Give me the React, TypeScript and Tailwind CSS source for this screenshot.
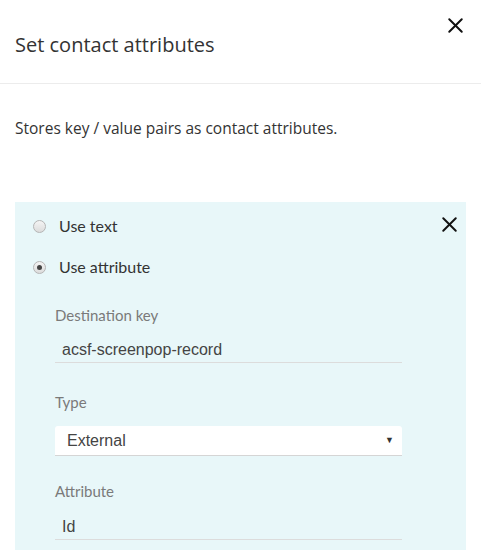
import { X } from 'lucide-react';

function Radio({ checked, label }: { checked?: boolean; label: string }) {
  return (
    <label className="flex h-[20px] items-center gap-[13px]">
      <span className="flex h-[13px] w-[13px] items-center justify-center rounded-full border border-[#b5b5b5] bg-gradient-to-b from-[#f4f4f4] to-[#dcdcdc]">
        {checked ? <span className="h-[5px] w-[5px] rounded-full bg-[#444]" /> : null}
      </span>
      <span className="text-[16px] text-[#333]">{label}</span>
    </label>
  );
}

function Field({ label, value, last }: { label: string; value: string; last?: boolean }) {
  return (
    <div className="flex flex-col">
      <span className="h-[20px] text-[15px] leading-[20px] text-[#7a7a7a]">{label}</span>
      <div
        className={`${last ? 'mt-[14px]' : 'mt-[12px]'} flex ${last ? 'h-[25px]' : 'h-[26px]'} items-center border-b border-[#dcdcdc] pl-[7px] font-['Liberation_Sans',Arial,sans-serif] text-[16px] text-[#444]`}
      >
        {value}
      </div>
    </div>
  );
}

export default function App() {
  return (
    <div className="h-[550px] w-[481px] overflow-hidden bg-white font-['Lato',sans-serif]">
      <div className="flex h-[84px] items-start justify-between border-b border-[#ececec] pl-[15px] pr-[13px]">
        <h1 className="mt-[31px] font-['Open_Sans',sans-serif] text-[20px] leading-[28px] text-[#333]">
          Set contact attributes
        </h1>
        <button type="button" className="mt-[13px] text-[#111]">
          <X size={25} strokeWidth={1.9} />
        </button>
      </div>

      <p className="mt-[33px] pl-[15px] font-['Open_Sans',sans-serif] text-[15.5px] leading-[22px] text-[#333]">
        Stores key / value pairs as contact attributes.
      </p>

      <div className="mx-[15px] mt-[63px] bg-[#e8f7f9] pb-[20px]">
        <div className="flex items-start justify-between pr-[4px] pl-[18px] pt-[14px]">
          <div className="flex flex-col gap-[21px]">
            <Radio label="Use text" />
            <Radio checked label="Use attribute" />
          </div>
          <button type="button" className="mt-[-4px] text-[#111]">
            <X size={25} strokeWidth={1.9} />
          </button>
        </div>

        <div className="mr-[64px] ml-[40px] mt-[28px] flex flex-col">
          <Field label="Destination key" value="acsf-screenpop-record" />

          <span className="mt-[29px] h-[20px] text-[15px] leading-[20px] text-[#7a7a7a]">Type</span>
          <div className="mt-[14px] flex h-[30px] items-center justify-between rounded-t-[3px] border-b border-[#d5d5d5] bg-white pr-[8px] pl-[12px] font-['Liberation_Sans',Arial,sans-serif] text-[16px] text-[#444]">
            <span>External</span>
            <span className="text-[9px] text-[#333]">▼</span>
          </div>

          <div className="mt-[25px]">
            <Field label="Attribute" value="Id" last />
          </div>
        </div>
      </div>
    </div>
  );
}
